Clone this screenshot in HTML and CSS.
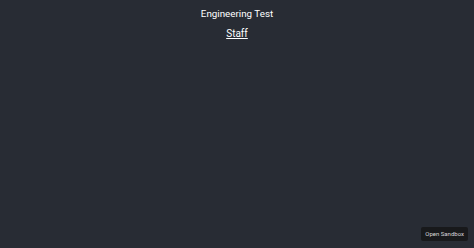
FILE: index.html
```html
<!DOCTYPE html>
<html>
<head>
<meta charset="utf-8">
<link rel="stylesheet" href="styles.css">
</head>
<body>
<div class="app">
  <h1 class="title">Engineering Test</h1>
  <a class="link" href="#">Staff</a>
</div>
<button class="sandbox">Open Sandbox</button>
</body>
</html>
```
FILE: styles.css
```css
html, body {
  margin: 0;
  height: 100%;
}
body {
  background: #282c34;
  font-family: Roboto, "Liberation Sans", sans-serif;
  color: #fff;
}
.app {
  display: flex;
  flex-direction: column;
  align-items: center;
  padding-top: 7px;
}
.title {
  margin: 0;
  font-size: 9.8px;
  font-weight: 400;
  line-height: 13px;
}
.link {
  margin-top: 7px;
  color: #fff;
  font-size: 10px;
  line-height: 13px;
  text-decoration: underline;
}
.sandbox {
  position: fixed;
  right: 6px;
  bottom: 7px;
  background: #18191b;
  color: #d8d8d8;
  border: none;
  border-radius: 2px;
  font-family: Roboto, "Liberation Sans", sans-serif;
  font-size: 6px;
  padding: 3px 4px;
  line-height: 8px;
}
```
